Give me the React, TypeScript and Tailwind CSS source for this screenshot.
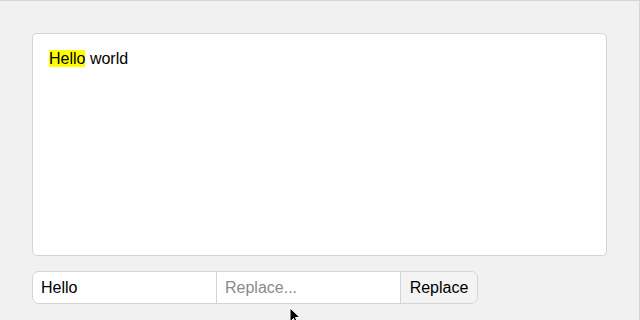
import React from "react";

export default function App() {
  return (
    <div className="relative w-[640px] h-[320px] overflow-hidden bg-[#f1f1f1] border-t border-r border-[#d6d6d6] font-['Liberation_Sans',Arial,sans-serif] text-black">
      <div className="pt-[32px] pl-[32px] flex flex-col">
        <div className="w-[575px] h-[223px] bg-white border border-[#d4d4d4] rounded-[5px] px-[16px] pt-[14px] text-[16px] leading-[22px]">
          <span className="bg-[#ffff00]">Hello</span> world
        </div>
        <div className="mt-[15px] flex h-[33px] w-[446px] border border-[#d4d4d4] rounded-[7px] overflow-hidden text-[16px]">
          <div className="w-[184px] bg-white flex items-center pl-[8px] border-r border-[#d4d4d4]">Hello</div>
          <div className="w-[184px] bg-white flex items-center pl-[8px] border-r border-[#d4d4d4] text-[#8a8a8a]">Replace...</div>
          <div className="flex-1 bg-[#f3f3f3] flex items-center justify-center">Replace</div>
        </div>
      </div>
      <svg className="absolute left-[289px] top-[306px]" width="12" height="18" viewBox="0 0 12 18">
        <path d="M1 1 L1 15 L4.5 11.5 L7 17 L9 16 L6.5 10.5 L11 10.5 Z" fill="#000" stroke="#fff" strokeWidth="1" />
      </svg>
    </div>
  );
}
